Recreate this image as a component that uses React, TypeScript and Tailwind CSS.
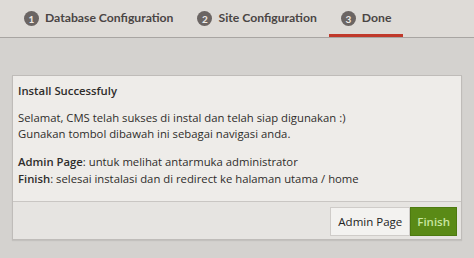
import React from "react";

function Step({ n, label, active }: { n: number; label: string; active?: boolean }) {
  return (
    <div className={`flex items-center h-full px-[12px] border-b-[3px] ${active ? "border-[#c0392b]" : "border-transparent"}`}>
      <span className="flex items-center justify-center w-[15px] h-[15px] rounded-full bg-[#6b6563] text-[#eeeae6] text-[10px] font-bold mr-[6px] leading-none">{n}</span>
      <span className="text-[12.2px] font-bold text-[#4a4544]">{label}</span>
    </div>
  );
}

export default function App() {
  return (
    <div className="w-[474px] h-[258px] bg-[#d4d2cf] overflow-hidden" style={{ fontFamily: '"Open Sans", "DejaVu Sans", sans-serif' }}>
      <div className="h-[38px] bg-[#dedbd7] border-b border-[#a8a5a2] flex items-stretch pl-[12px]" style={{ fontFamily: 'Lato, "Open Sans", sans-serif' }}>
        <div className="flex items-stretch pt-[3px]">
          <Step n={1} label="Database Configuration" />
          <Step n={2} label="Site Configuration" />
          <Step n={3} label="Done" active />
        </div>
      </div>
      <div className="pt-[37px] px-[12px]">
        <div className="border border-[#bfbcb9] bg-[#eeece9] text-[11.3px] text-[#2e2c2b] shadow-[0_1px_1px_rgba(0,0,0,0.08)]">
          <div className="px-[5px] pt-[7px] pb-[14px] leading-[16px]">
            <div className="font-semibold mb-[11px]">Install Successfuly</div>
            <div>Selamat, CMS telah sukses di instal dan telah siap digunakan :)</div>
            <div>Gunakan tombol dibawah ini sebagai navigasi anda.</div>
            <div className="mt-[12px]"><span className="font-semibold">Admin Page</span>: untuk melihat antarmuka administrator</div>
            <div className="mt-[1px]"><span className="font-semibold">Finish</span>: selesai instalasi dan di redirect ke halaman utama / home</div>
          </div>
          <div className="border-t border-[#c9c6c3] bg-[#e6e4e1] flex justify-end px-[4px] pt-[5px] pb-[3px]">
            <button className="h-[29px] px-[7px] bg-[#f3f2f0] border border-[#cfccc9] text-[11.5px] text-[#222]">Admin Page</button>
            <button className="h-[29px] px-[6px] bg-[#5a8a16] border border-[#4d7a10] text-[11.5px] font-semibold text-[#c8e6a0]">Finish</button>
          </div>
        </div>
      </div>
    </div>
  );
}
